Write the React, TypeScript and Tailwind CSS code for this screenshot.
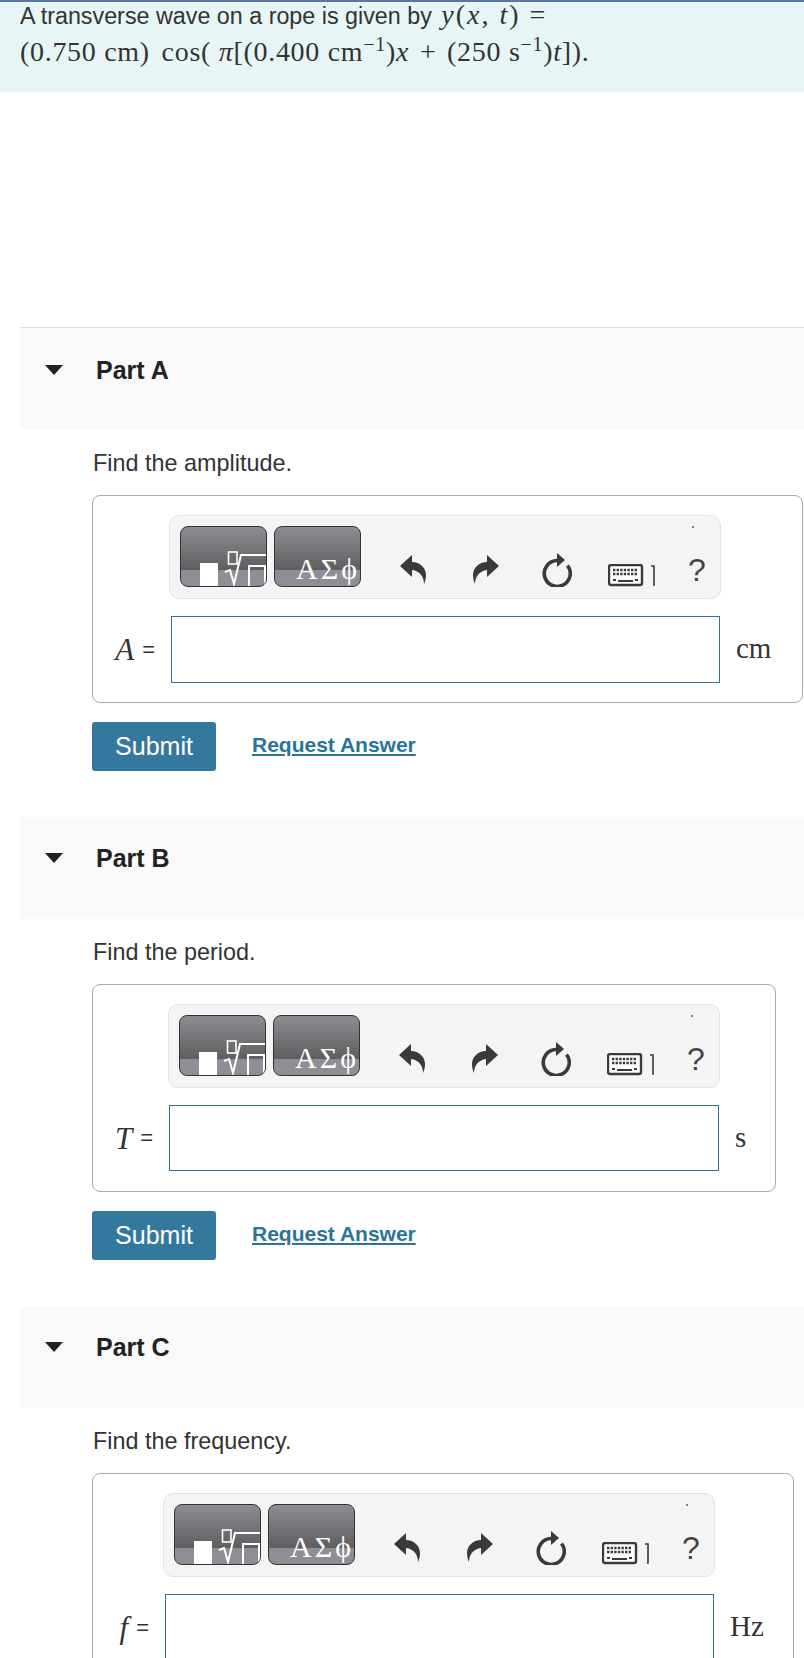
import React from 'react'

const serif = "font-['Liberation_Serif',serif]"

const UndoIcon = ({ flip = false }: { flip?: boolean }) => (
  <svg width="26" height="29" viewBox="0 0 26 29" className={flip ? '-scale-x-100' : ''}>
    <path
      d="M0 11 L12 0 V7 C20 7 26 13 26 20 C26 24 25 27 24 29 C24 22 20 16 12 15 V22 Z"
      fill="#3a3a3a"
    />
  </svg>
)

const ReloadIcon = () => (
  <svg width="30" height="34" viewBox="0 0 30 34">
    <path d="M15 7.5 A13 13 0 1 0 25.5 12.5" fill="none" stroke="#3a3a3a" strokeWidth="3.6" />
    <path d="M15 0 L23 7 L15 14 Z" fill="#3a3a3a" />
  </svg>
)

const KeyboardIcon = () => (
  <svg width="47" height="23" viewBox="0 0 47 23">
    <rect x="1" y="1" width="33" height="20" rx="2" fill="#fff" stroke="#3a3a3a" strokeWidth="2.4" />
    <path d="M5 6 H30" stroke="#3a3a3a" strokeWidth="2.4" strokeDasharray="2.4 1.2" />
    <path d="M5 10 H30" stroke="#3a3a3a" strokeWidth="2.4" strokeDasharray="2.4 1.2" />
    <path d="M5 16 H8 M27 16 H30" stroke="#3a3a3a" strokeWidth="2" />
    <path d="M10 17 H25" stroke="#3a3a3a" strokeWidth="2" />
    <path d="M43 2 H46 V21 H45" fill="none" stroke="#3a3a3a" strokeWidth="1.6" />
  </svg>
)

const ToolButton = ({ children, className = '' }: { children: React.ReactNode; className?: string }) => (
  <div
    className={`relative h-[61px] w-[87px] shrink-0 overflow-hidden rounded-lg border border-[#333] bg-[linear-gradient(#8e8d93,#5e5e5f_73%,#8f8e96_73%)] ${className}`}
  >
    {children}
  </div>
)

const Toolbar = ({ className }: { className: string }) => (
  <div
    className={`relative flex h-[84px] w-[552px] items-start rounded-[10px] border border-[#e3e3e3] bg-[#f4f4f4] pl-[10px] pt-[10px] ${className}`}
  >
    <ToolButton>
      <svg width="85" height="59" viewBox="1 1 85 59" className="absolute left-0 top-0">
        <rect x="20" y="37" width="18" height="24" fill="#fff" />
        <rect x="48.5" y="26" width="8.5" height="12" fill="none" stroke="#fff" strokeWidth="1.6" />
        <path d="M45 46 L50 44 L54 58 L61 29 H87" fill="none" stroke="#fff" strokeWidth="2" />
        <path d="M69 61 V40 H85 V61" fill="none" stroke="#fff" strokeWidth="2" />
      </svg>
    </ToolButton>
    <ToolButton className="ml-[7px]">
      <span className={`absolute bottom-[2px] right-[0px] text-[30px] leading-none tracking-[3px] text-white ${serif}`}>
        ΑΣϕ
      </span>
    </ToolButton>
    <div className="ml-[39px] mt-[29px]">
      <UndoIcon />
    </div>
    <div className="ml-[47px] mt-[29px]">
      <UndoIcon flip />
    </div>
    <div className="ml-[43px] mt-[27px]">
      <ReloadIcon />
    </div>
    <div className="ml-[36px] mt-[38px]">
      <KeyboardIcon />
    </div>
    <span className="ml-[33px] mt-[27px] font-['Liberation_Sans',sans-serif] text-[32px] leading-[34px] text-[#444]">
      ?
    </span>
    <span className="absolute right-[26px] top-[10px] h-[2px] w-[2px] rounded-full bg-[#555]" />
  </div>
)

type PartProps = {
  name: string
  prompt: string
  symbol: string
  unit: string
  boxClass: string
  toolbarClass: string
  labelClass: string
  inputClass: string
  headerClass: string
  last?: boolean
}

const Part = ({ name, prompt, symbol, unit, boxClass, toolbarClass, labelClass, inputClass, headerClass, last }: PartProps) => (
  <section>
    <div className={`ml-5 flex items-start bg-[#f9f9f9] pl-[25px] ${headerClass}`}>
      <span className="mt-[12px] h-0 w-0 border-x-[9.5px] border-t-[10px] border-x-transparent border-t-[#222]" />
      <h2 className="ml-[33px] text-[25px] font-bold leading-[34px] text-[#222]">{name}</h2>
    </div>
    <p className="ml-[93px] mt-[17px] text-[23.4px] leading-[32px] text-[#333]">{prompt}</p>
    <div className={`ml-[92px] mt-[16px] rounded-lg border border-[#aaa] pt-[19px] ${boxClass}`}>
      <Toolbar className={toolbarClass} />
      <div className="mt-[17px] flex items-center">
        <span className={`flex shrink-0 items-center justify-end pr-[16px] ${labelClass}`}>
          <i className={`text-[31px] leading-none text-[#333] ${serif}`}>{symbol}</i>
          <span className="ml-[8px] text-[22px] leading-none text-[#333]">=</span>
        </span>
        <div className={`border-[1.5px] border-[#2e7399] bg-white ${inputClass}`} />
        <span className={`ml-[16px] -mt-[2px] text-[29px] leading-none text-[#333] ${serif}`}>{unit}</span>
      </div>
    </div>
    {!last && (
      <div className="ml-[92px] mt-[19px] flex h-[49px] items-center">
        <button className="h-[49px] w-[124px] rounded-[3px] bg-[#35789e] text-[25px] text-white">Submit</button>
        <a className="-mt-[3px] ml-9 text-[21px] font-bold text-[#2a7399] underline">Request Answer</a>
      </div>
    )}
  </section>
)

const App = () => (
  <div className="h-[1658px] w-[804px] overflow-hidden bg-white font-['Liberation_Sans',sans-serif]">
    <header className="h-[92px] border-t-2 border-[#5a76a8] bg-[#e8f5f7] pl-5 text-[#333]">
      <p className="mb-[6px] text-[23.3px] leading-[26px]">
        A transverse wave on a rope is given by{' '}
        <span className={`ml-[3px] text-[28px] tracking-[2px] ${serif}`}>
          <i>y</i>(<i>x</i>, <i>t</i>) =
        </span>
      </p>
      <p className={`text-[28px] leading-[33px] tracking-[0.7px] ${serif}`}>
        (0.750 cm) <span className="ml-1">cos(</span> <i>π</i>[(0.400 cm
        <sup className="text-[20px]">−1</sup>)<i>x</i> <span className="mx-[3px]">+</span> (250 s
        <sup className="text-[20px]">−1</sup>)<i>t</i>]).
      </p>
    </header>
    <div className="h-[235px]" />
    <Part
      name="Part A"
      prompt="Find the amplitude."
      symbol="A"
      unit="cm"
      headerClass="h-[103px] border-t border-[#ddd] pt-[25px]"
      boxClass="h-[208px] w-[711px]"
      toolbarClass="ml-[76px]"
      labelClass="w-[78px]"
      inputClass="h-[67px] w-[549px]"
    />
    <div className="h-[46px]" />
    <Part
      name="Part B"
      prompt="Find the period."
      symbol="T"
      unit="s"
      headerClass="h-[102px] pt-6"
      boxClass="h-[208px] w-[684px]"
      toolbarClass="ml-[75px]"
      labelClass="w-[76px]"
      inputClass="h-[66px] w-[550px]"
    />
    <div className="h-[46px]" />
    <Part
      name="Part C"
      prompt="Find the frequency."
      symbol="f"
      unit="Hz"
      headerClass="h-[102px] pt-6"
      boxClass="h-[208px] w-[702px]"
      toolbarClass="ml-[70px]"
      labelClass="w-[72px]"
      inputClass="h-[67px] w-[549px]"
      last
    />
  </div>
)

export default App
